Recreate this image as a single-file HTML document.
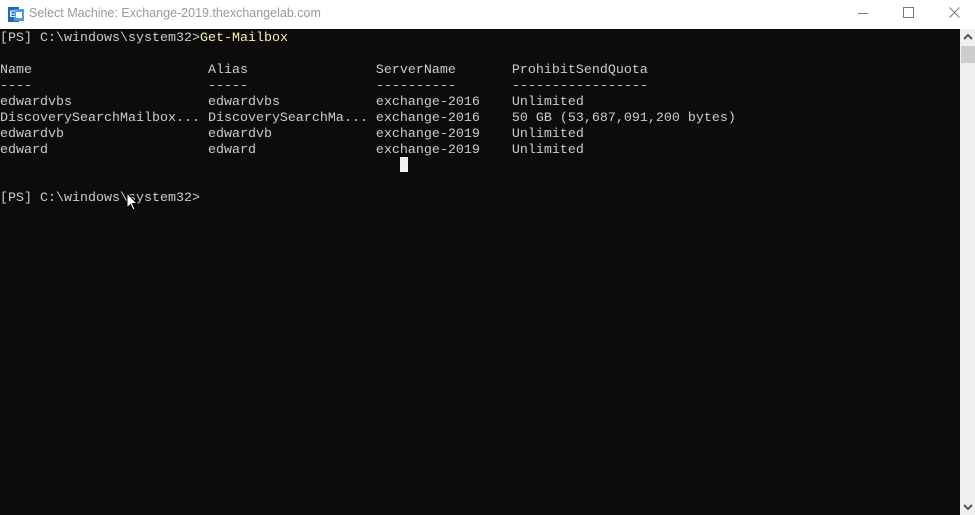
<!DOCTYPE html>
<html><head><style>
html,body{margin:0;padding:0;width:975px;height:515px;overflow:hidden;background:#0c0c0c}
.title{position:absolute;left:0;top:0;width:975px;height:29px;background:#fff}
.title .t{position:absolute;left:29px;top:6px;font:12.5px "Liberation Sans",sans-serif;color:#999}
.con{position:absolute;left:0;top:29px;width:960px;height:486px;background:#0c0c0c}
pre{margin:0;position:absolute;left:0;top:31px;font:13.333px/16px "Liberation Mono",monospace;color:#cccccc}
.y{color:#f9f1a5}
.sb{position:absolute;left:960px;top:29px;width:15px;height:486px;background:#f0f0f0}
.thumb{position:absolute;left:961px;top:46px;width:14px;height:17px;background:#cdcdcd}
.cur{position:absolute;left:400px;top:157px;width:8px;height:15px;background:#f2f2f2}
</style></head><body>
<div class="title">
<svg style="position:absolute;left:8px;top:6px" width="17" height="17" viewBox="0 0 17 17"><rect x="0" y="1" width="11" height="15" fill="#1f6ab8"/><rect x="6" y="3" width="10" height="12" fill="#4a9ee8"/><rect x="8" y="6" width="6" height="6" fill="#fff"/><text x="1.5" y="11" font-family="Liberation Sans" font-size="9" font-weight="bold" fill="#fff">E</text></svg>
<span class="t">Select Machine: Exchange-2019.thexchangelab.com</span>
<svg style="position:absolute;left:858px;top:8px" width="12" height="12"><line x1="0" y1="5.5" x2="10" y2="5.5" stroke="#777" stroke-width="1"/></svg>
<svg style="position:absolute;left:903px;top:7px" width="12" height="12"><rect x="0.5" y="0.5" width="10" height="10" fill="none" stroke="#777"/></svg>
<svg style="position:absolute;left:949px;top:7px" width="12" height="12"><path d="M0.5 0.5L10.5 10.5M10.5 0.5L0.5 10.5" stroke="#777"/></svg>
</div>
<div class="con"></div>
<pre>[PS] C:\windows\system32&gt;<span class="y">Get-Mailbox</span>

Name                      Alias                ServerName       ProhibitSendQuota
----                      -----                ----------       -----------------
edwardvbs                 edwardvbs            exchange-2016    Unlimited
DiscoverySearchMailbox... DiscoverySearchMa... exchange-2016    50 GB (53,687,091,200 bytes)
edwardvb                  edwardvb             exchange-2019    Unlimited
edward                    edward               exchange-2019    Unlimited


[PS] C:\windows\system32&gt;</pre>
<div class="cur"></div>
<svg style="position:absolute;left:126px;top:192px" width="12" height="20" viewBox="0 0 12 20"><path d="M1 1L1 16L4.5 12.5L7 18L9 17L6.5 11.5L11 11.5Z" fill="#fff" stroke="#000" stroke-width="1"/></svg>
<div class="sb"></div>
<div class="thumb"></div>
<svg style="position:absolute;left:963px;top:33px" width="10" height="8"><path d="M1 6L5 2L9 6" fill="none" stroke="#555" stroke-width="2"/></svg>
<svg style="position:absolute;left:963px;top:503px" width="10" height="8"><path d="M1 2L5 6L9 2" fill="none" stroke="#555" stroke-width="2"/></svg>
</body></html>
